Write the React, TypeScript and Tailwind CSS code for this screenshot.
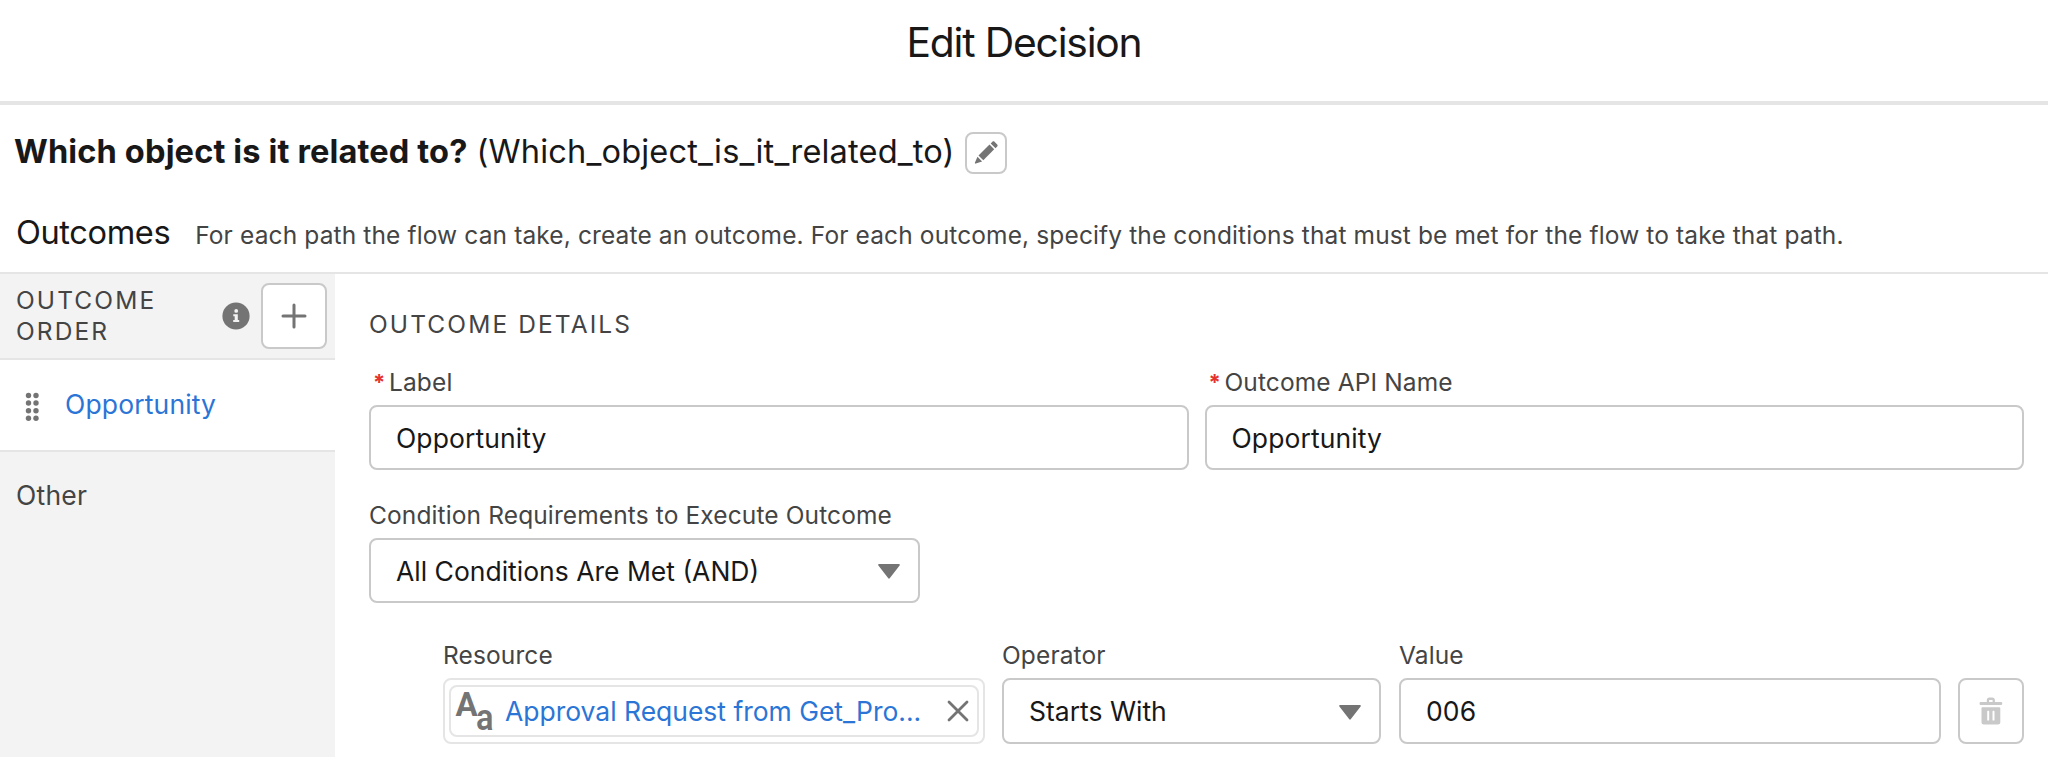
import clsx from "clsx";
import { ReactNode } from "react";

interface IField {
  label: string;
  required?: boolean;
  className?: string;
  children: ReactNode;
}

function Field({ label, required, className, children }: IField) {
  return (
    <div className={clsx("flex flex-col gap-2", className)}>
      <div className="flex h-[30px] items-center whitespace-nowrap text-[24.5px] leading-[30px] tracking-[0.12px] text-[#444]">
        {required && (
          <span className="w-5 pl-1 text-[22px] font-bold text-[#e5322d]">
            *
          </span>
        )}
        {label}
      </div>
      {children}
    </div>
  );
}

function TextBox({ value }: { value: string }) {
  return (
    <div className="flex min-h-[65px] flex-1 items-center rounded-lg border-2 border-[#c9c9c9] bg-white px-[25px] pt-0.5 text-[26.5px] tracking-[0.1px]">
      {value}
    </div>
  );
}

function SelectBox({ value }: { value: string }) {
  return (
    <div className="flex min-h-[65px] flex-1 items-center justify-between rounded-lg border-2 border-[#c9c9c9] bg-white pt-0.5 pr-[18px] pl-[25px] text-[26.5px] whitespace-nowrap">
      {value}
      <svg width="22" height="15" viewBox="0 0 22 15" fill="#747474">
        <path d="M1.2 0h19.6c.9 0 1.3.9.8 1.5l-9.7 12.6a1.1 1.1 0 0 1-1.8 0L.4 1.5C-.1.9.3 0 1.2 0z" />
      </svg>
    </div>
  );
}

function PencilIcon() {
  return (
    <svg width="24" height="24" viewBox="0 0 24 24" fill="#747474">
      <path d="M4.5 14.5 15.5 3.6l4.7 4.7L9.3 19.3z" />
      <path d="M16.7 2.4l1.7-1.7c.6-.6 1.5-.6 2.1 0l2.7 2.7c.6.6.6 1.5 0 2.1l-1.7 1.7z" />
      <path d="M3.5 15.8l4.6 4.6-6.3 2.2c-.6.2-1.1-.3-.9-.9z" />
    </svg>
  );
}

function InfoIcon() {
  return (
    <svg width="28" height="28" viewBox="0 0 28 28">
      <circle cx="14" cy="14" r="13.6" fill="#747474" />
      <circle cx="14.2" cy="8.9" r="1.9" fill="#f3f3f3" />
      <path
        d="M11.3 12.2h4.5v5.7h1.4v2h-6v-2h1.5v-3.7h-1.4z"
        fill="#f3f3f3"
      />
    </svg>
  );
}

function GripIcon() {
  return (
    <svg width="14" height="30" viewBox="0 0 14 30" fill="#747474">
      {[3.5, 11].map((x) =>
        [3.5, 11, 18.7, 26.3].map((y) => (
          <circle key={`${x}-${y}`} cx={x} cy={y} r="2.7" />
        )),
      )}
    </svg>
  );
}

function TrashIcon() {
  return (
    <svg width="24" height="28" viewBox="0 0 24 28" fill="#c9c9c9">
      <path d="M1.5 5h6.3V3.2C7.8 1.5 8.9.5 10.4.5h2.9c1.5 0 2.6 1 2.6 2.7V5h6.4c.5 0 .9.4.9.9v1.2c0 .5-.4.9-.9.9H1.5c-.5 0-.9-.4-.9-.9V5.9c0-.5.4-.9.9-.9zm8.6 0h3.5V2.9h-3.5z" />
      <path
        fillRule="evenodd"
        d="M3.4 10.2h17c.5 0 .9.4.9.9v14.1c0 1.3-1 2.3-2.3 2.3H4.8c-1.3 0-2.3-1-2.3-2.3V11.1c0-.5.4-.9.9-.9zm5.4 3.6c-.3 0-.6.3-.6.6v8.5c0 .3.3.6.6.6h.8c.3 0 .6-.3.6-.6v-8.5c0-.3-.3-.6-.6-.6zm5.3 0c-.3 0-.6.3-.6.6v8.5c0 .3.3.6.6.6h.8c.3 0 .6-.3.6-.6v-8.5c0-.3-.3-.6-.6-.6z"
      />
    </svg>
  );
}

function TextTypeIcon() {
  return (
    <svg
      width="40"
      height="48"
      viewBox="0 0 40 48"
      fill="#747474"
      className="overflow-visible font-['Roboto',sans-serif]"
    >
      <text x="0.5" y="28.5" className="text-[33px] font-bold">
        A
      </text>
      <text
        x="21"
        y="42.5"
        textLength="17.5"
        lengthAdjust="spacingAndGlyphs"
        className="text-[36px] font-semibold"
      >
        a
      </text>
    </svg>
  );
}

function Sidebar() {
  return (
    <div className="w-[335px] shrink-0 bg-[#f3f3f3]">
      <div className="flex h-[86px] items-center border-b-2 border-[#e5e5e5] pr-2 pl-4">
        <div className="w-[180px] text-[24.5px] leading-[31px] tracking-[2.1px] text-[#444]">
          OUTCOME ORDER
        </div>
        <div className="ml-auto flex items-center gap-[11px]">
          <InfoIcon />
          <button className="flex size-[66px] items-center justify-center rounded-lg border-2 border-[#c9c9c9] bg-white">
            <svg width="26" height="26" viewBox="0 0 26 26" fill="none">
              <path
                d="M13 2v22M2 13h22"
                stroke="#747474"
                strokeWidth="3"
                strokeLinecap="round"
              />
            </svg>
          </button>
        </div>
      </div>
      <div className="flex h-[92px] items-center gap-[26px] border-b-2 border-[#e5e5e5] bg-white pl-[25px] text-[26.5px] tracking-[0.15px] text-[#2b75d6]">
        <div className="pt-1">
          <GripIcon />
        </div>
        Opportunity
      </div>
      <div className="flex h-[87px] items-center pl-4 text-[26.5px] tracking-[0.25px] text-[#444]">
        Other
      </div>
    </div>
  );
}

function ResourcePill() {
  return (
    <div className="h-[66px] rounded-lg border-2 border-[#e5e5e5] bg-white px-1 py-[5px]">
      <div className="flex h-[52px] items-center rounded-lg border-2 border-[#e5e5e5] pr-2 pl-1">
        <TextTypeIcon />
        <span className="flex-1 pt-px pl-2.5 text-[26.5px] tracking-[-0.02px] whitespace-nowrap text-[#2b75d6]">
          Approval Request from Get_Pro...
        </span>
        <svg width="22" height="22" viewBox="0 0 22 22" fill="none">
          <path
            d="M2 2l18 18M20 2 2 20"
            stroke="#747474"
            strokeWidth="2.8"
            strokeLinecap="round"
          />
        </svg>
      </div>
    </div>
  );
}

export default function App() {
  return (
    <div className="flex h-[757px] w-[2048px] flex-col overflow-hidden bg-white font-['Inter',sans-serif] text-[#181818]">
      <header className="flex h-[105px] shrink-0 items-center justify-center border-b-4 border-[#e5e5e5] pb-4">
        <h1 className="text-[40.8px] tracking-[-1.2px]">Edit Decision</h1>
      </header>

      <div className="flex items-center pt-[27px] pl-[14px] text-[32.6px] leading-[42px] whitespace-nowrap">
        <span className="-mt-[5px] font-bold tracking-[0.13px]">
          Which object is it related to?
        </span>
        <span className="-mt-[5px] ml-[9px] tracking-[0.15px]">
          (Which_object_is_it_related_to)
        </span>
        <button className="ml-2.5 flex size-[42px] items-center justify-center rounded-lg border-2 border-[#c9c9c9]">
          <PencilIcon />
        </button>
      </div>

      <div className="flex h-[100px] items-baseline gap-[25px] border-b-2 border-[#e5e5e5] pt-[38px] pl-4 leading-[40px] whitespace-nowrap">
        <h2 className="text-[32.6px] tracking-[-0.4px]">Outcomes</h2>
        <p className="text-[24.5px] tracking-[0.125px] text-[#444]">
          For each path the flow can take, create an outcome. For each outcome,
          specify the conditions that must be met for the flow to take that
          path.
        </p>
      </div>

      <div className="flex min-h-0 flex-1">
        <Sidebar />
        <main className="flex-1 pt-[35px] pr-6 pl-[34px]">
          <h3 className="text-[24.5px] leading-[30px] tracking-[2.1px] text-[#444]">
            OUTCOME DETAILS
          </h3>
          <div className="mt-7 grid grid-cols-2 gap-4">
            <Field label="Label" required>
              <TextBox value="Opportunity" />
            </Field>
            <Field label="Outcome API Name" required>
              <TextBox value="Opportunity" />
            </Field>
          </div>
          <Field
            label="Condition Requirements to Execute Outcome"
            className="mt-[30px] w-[551px]"
          >
            <SelectBox value="All Conditions Are Met (AND)" />
          </Field>
          <div className="mt-[37px] flex h-[104px] pl-[74px]">
            <Field label="Resource" className="w-[542px]">
              <ResourcePill />
            </Field>
            <Field label="Operator" className="ml-[17px] w-[379px]">
              <SelectBox value="Starts With" />
            </Field>
            <Field label="Value" className="ml-[18px] w-[542px]">
              <TextBox value="006" />
            </Field>
            <button className="ml-auto flex size-[66px] items-center justify-center self-end rounded-lg border-2 border-[#c9c9c9]">
              <TrashIcon />
            </button>
          </div>
        </main>
      </div>
    </div>
  );
}
